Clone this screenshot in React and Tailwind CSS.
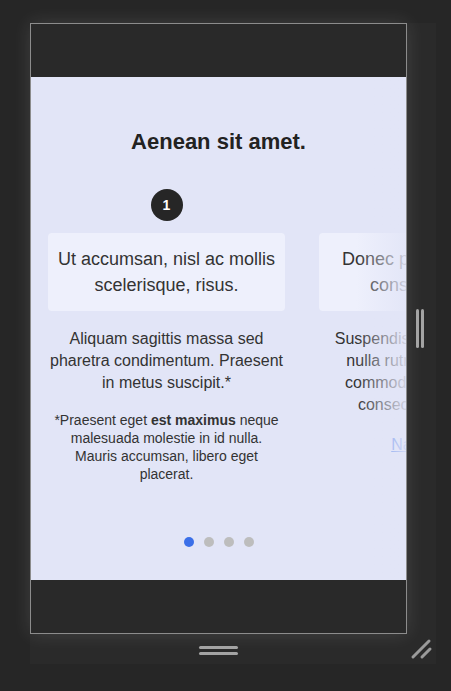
import React from 'react'

const slides = [
    {
        card: 'Ut accumsan, nisl ac mollis scelerisque, risus.',
        text: 'Aliquam sagittis massa sed pharetra condimentum. Praesent in metus suscipit.*',
        note: true,
    },
    {
        card: 'Donec pellentesque nisi consequat tellus.',
        text: 'Suspendisse potenti tempus, nulla rutrum quis tellus ut, commodo semper nunc at consectetur ipsum elit.',
        link: 'Nam porttitor',
    },
]

function Slide({ slide, index }) {
    return (
        <div className="flex w-[237px] shrink-0 flex-col items-center text-center">
            <div className={index === 0 ? 'flex h-8 w-8 items-center justify-center rounded-full bg-[#262626] text-sm font-bold text-white' : 'h-8 w-8'}>
                {index === 0 ? '1' : ''}
            </div>
            <div className="mt-3 w-full rounded bg-[#eef0fc] px-2 py-[13px] text-[18px] leading-[26px] text-[#333]">
                {slide.card}
            </div>
            <p className="mt-[17px] text-[16px] leading-[22px] text-[#333]">{slide.text}</p>
            {slide.note && (
                <p className="mt-[17px] px-1 text-[14px] leading-[18px] text-[#333]">
                    *Praesent eget <b>est maximus</b> neque malesuada molestie in id nulla. Mauris accumsan, libero eget placerat.
                </p>
            )}
            {slide.link && (
                <a href="#" className="mt-[18px] text-[16px] leading-[22px] text-[#3b6fe8] underline">{slide.link}</a>
            )}
        </div>
    )
}

export default function App() {
    return (
        <div className="min-h-screen bg-[#262626] pl-[30px] pt-[23px] font-['Liberation_Sans',Arial,sans-serif]">
            <div className="grid w-[406px] grid-cols-[377px_29px] grid-rows-[611px_30px] bg-[#2a2a2a]">
                <div className="relative z-10 flex flex-col border border-[#8c8c8c] bg-[#292929] shadow-[0_0_18px_rgba(255,255,255,0.12)]">
                    <div className="h-[53px] shrink-0"></div>
                    <div className="relative flex h-[503px] shrink-0 flex-col overflow-hidden bg-[#e2e5f7]">
                        <h1 className="pt-[51px] text-center text-[22px] font-bold leading-[28px] text-[#222]">Aenean sit amet.</h1>
                        <div className="mt-[33px] flex gap-[34px] pl-[17px]">
                            {slides.map((s, i) => (
                                <Slide key={i} slide={s} index={i} />
                            ))}
                        </div>
                        <div className="mt-auto flex justify-center gap-[10px] pb-[33px] pl-px">
                            <span className="h-[10px] w-[10px] rounded-full bg-[#3b6fe8]"></span>
                            <span className="h-[10px] w-[10px] rounded-full bg-[#bdbdbd]"></span>
                            <span className="h-[10px] w-[10px] rounded-full bg-[#bdbdbd]"></span>
                            <span className="h-[10px] w-[10px] rounded-full bg-[#bdbdbd]"></span>
                        </div>
                        <div className="pointer-events-none absolute bottom-0 right-0 top-0 w-[50px] bg-linear-to-r from-[#e2e5f7]/0 to-[#e2e5f7]/90"></div>
                    </div>
                    <div className="h-[53px] shrink-0"></div>
                </div>
                <div className="flex items-center justify-center gap-[2px] pr-[3px]">
                    <span className="h-[39px] w-[3px] rounded-sm bg-[#a3a3a3]"></span>
                    <span className="h-[39px] w-[3px] rounded-sm bg-[#a3a3a3]"></span>
                </div>
                <div className="flex flex-col items-center justify-center gap-[3px] pt-[3px]">
                    <span className="h-[3px] w-[39px] rounded-sm bg-[#a3a3a3]"></span>
                    <span className="h-[3px] w-[39px] rounded-sm bg-[#a3a3a3]"></span>
                </div>
                <svg width="29" height="30" viewBox="0 0 29 30" fill="none" stroke="#9a9a9a" strokeWidth="3" strokeLinecap="round">
                    <path d="M6 23L22 7" />
                    <path d="M15 23L23 15" />
                </svg>
            </div>
        </div>
    )
}
